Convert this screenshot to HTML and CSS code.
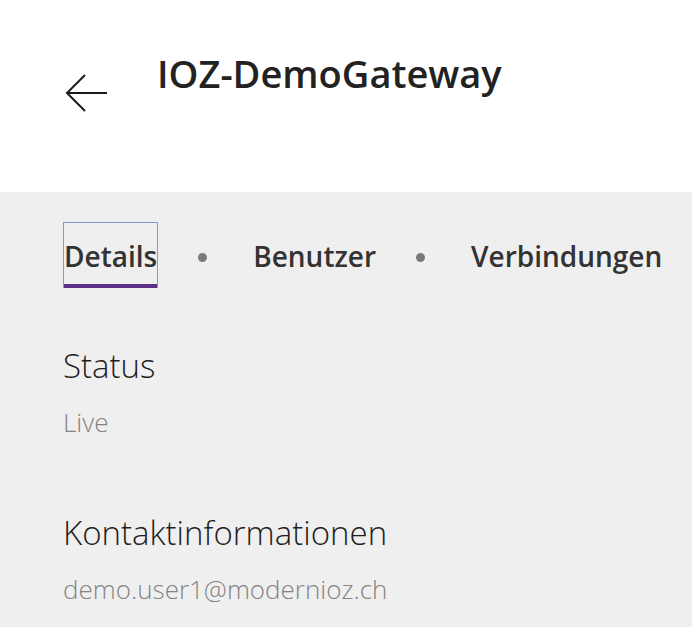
FILE: index.html
```html
<!DOCTYPE html>
<html lang="de">
<head>
<meta charset="utf-8">
<title>IOZ-DemoGateway</title>
<link rel="stylesheet" href="styles.css">
</head>
<body>
<header class="header">
  <button class="back" aria-label="Zurück">
    <svg width="44" height="38" viewBox="0 0 44 38" fill="none" stroke="#1a1a1a" stroke-width="2" stroke-linecap="butt">
      <path d="M43 19H3"/>
      <path d="M21 1L3 19L21 37"/>
    </svg>
  </button>
  <h1 class="title">IOZ-DemoGateway</h1>
</header>
<main class="content">
  <nav class="tabs">
    <a class="tab tab-active">Details</a>
    <span class="dot"></span>
    <a class="tab">Benutzer</a>
    <span class="dot"></span>
    <a class="tab">Verbindungen</a>
  </nav>
  <section class="field">
    <h2 class="label">Status</h2>
    <p class="value">Live</p>
  </section>
  <section class="field">
    <h2 class="label">Kontaktinformationen</h2>
    <p class="value">demo.user1@modernioz.ch</p>
  </section>
</main>
</body>
</html>
```

FILE: styles.css
```css
html, body {
  margin: 0;
  padding: 0;
  height: 100%;
}
body {
  font-family: "Open Sans", "Noto Sans", sans-serif;
  background: #efefef;
  overflow: hidden;
}
.header {
  background: #ffffff;
  height: 192px;
  display: flex;
  align-items: flex-start;
  box-sizing: border-box;
  padding: 0 0 0 64px;
}
.back {
  border: 0;
  background: none;
  padding: 0;
  margin-top: 74px;
  width: 44px;
  height: 38px;
  display: block;
}
.back svg { display: block; }
.title {
  margin: 48px 0 0 49px;
  font-size: 38px;
  font-weight: 600;
  color: #222222;
  line-height: 50px;
}
.content {
  padding: 30px 0 0 63px;
}
.tabs {
  display: flex;
  align-items: flex-start;
  height: 66px;
}
.tab {
  font-size: 28px;
  font-weight: 600;
  color: #333333;
  line-height: 38px;
  padding-top: 15px;
}
.tab-active {
  box-sizing: border-box;
  height: 66px;
  padding: 14px 0 0 0;
  border: 1px solid #7a9bd8;
  border-bottom: 0;
  box-shadow: inset 0 -4px 0 #5b2f8a;
}
.dot {
  width: 9px;
  height: 9px;
  border-radius: 50%;
  background: #7a7a7a;
  margin: 31px 46px 0 40px;
}
.field {
  margin-top: 58px;
}
.field + .field { margin-top: 74px; }
.label {
  margin: 0;
  font-size: 33px;
  font-weight: 300;
  color: #1e1e1e;
  line-height: 40px;
}
.value {
  margin: 19px 0 0;
  font-size: 26px;
  font-weight: 300;
  color: #848484;
  line-height: 34px;
}
```
